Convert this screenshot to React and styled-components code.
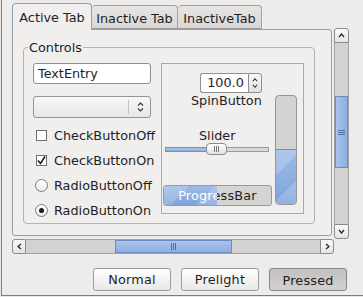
import React from "react";
import styled, { createGlobalStyle } from "styled-components";

const GlobalStyle = createGlobalStyle`
  html, body {
    margin: 0;
    padding: 0;
    background: #e9e8e7;
    overflow: hidden;
  }
  body {
    font-family: "DejaVu Sans", "Liberation Sans", sans-serif;
    font-size: 12.8px;
    color: #1e1e1e;
  }
`;

const BLUE = "linear-gradient(180deg, #a9c4ec 0%, #8eafe2 100%)";
const STRIPES =
  "repeating-linear-gradient(135deg, rgba(255,255,255,0.18) 0 18px, rgba(255,255,255,0) 18px 36px), linear-gradient(180deg, #9dbbe8 0%, #7fa3da 100%)";

const Window = styled.div`
  box-sizing: border-box;
  margin-left: 1px;
  width: 363px;
  height: 296px;
  border-left: 1px solid #7c7c7c;
  border-bottom: 1px solid #7c7c7c;
  background: #edeceb;
  padding: 3px 0 0 10px;
  display: flex;
  flex-direction: column;
`;

const Scrolled = styled.div`
  display: grid;
  grid-template-columns: 322px 15px;
  grid-template-rows: 236px 15px;
`;

const Notebook = styled.div`
  display: flex;
  flex-direction: column;
`;

const TabRow = styled.div`
  display: flex;
  align-items: flex-end;
  height: 26px;
`;

const Tab = styled.div`
  box-sizing: border-box;
  width: ${(p) => p.$w}px;
  height: ${(p) => (p.$active ? 27 : 24)}px;
  margin-bottom: ${(p) => (p.$active ? -1 : 0)}px;
  position: relative;
  z-index: ${(p) => (p.$active ? 2 : 0)};
  border: 1px solid ${(p) => (p.$active ? "#8c9fbd" : "#a2a2a2")};
  border-bottom: ${(p) => (p.$active ? "none" : "1px solid #9c9c9c")};
  border-left: ${(p) => (p.$first || p.$active ? "" : "none")};
  border-radius: 4px 4px 0 0;
  background: ${(p) =>
    p.$active ? "#f0efee" : "linear-gradient(180deg, #e6e5e4 0%, #d8d7d5 100%)"};
  display: flex;
  justify-content: center;
  padding-top: ${(p) => (p.$active ? 6 : 5)}px;
  line-height: 15px;
  white-space: nowrap;
`;

const Panel = styled.div`
  box-sizing: border-box;
  width: 320px;
  height: 207px;
  border: 1px solid #9c9c9c;
  border-radius: 0 3px 3px 3px;
  background: #f0efee;
  padding: 17px 0 0 10px;
`;

const Frame = styled.div`
  box-sizing: border-box;
  position: relative;
  width: 292px;
  height: 177px;
  border: 1px solid #b3b3b3;
  border-radius: 4px;
  padding: 15px 0 0 9px;
  display: flex;
  gap: 10px;
`;

const FrameLabel = styled.span`
  position: absolute;
  top: -8px;
  left: 4px;
  padding: 0 1px;
  line-height: 15px;
  background: #f0efee;
`;

const LeftCol = styled.div`
  width: 118px;
  flex-shrink: 0;
  display: flex;
  flex-direction: column;
`;

const Entry = styled.div`
  box-sizing: border-box;
  height: 21px;
  border: 1px solid #8e8e8e;
  border-radius: 3px;
  background: #ffffff;
  padding-left: 4px;
  line-height: 19px;
`;

const Combo = styled.div`
  box-sizing: border-box;
  margin-top: 12px;
  height: 22px;
  border: 1px solid #959595;
  border-radius: 3px;
  background: linear-gradient(180deg, #f8f8f7 0%, #e7e6e5 100%);
  display: flex;
  justify-content: flex-end;
  align-items: center;
`;

const ComboSep = styled.div`
  width: 1px;
  height: 14px;
  background: #c2c2c2;
  margin-right: 5px;
`;

const ComboArrow = styled.div`
  width: 12px;
  margin-right: 4px;
  display: flex;
  justify-content: center;
`;

const Toggles = styled.div`
  margin-top: 5px;
  display: flex;
  flex-direction: column;
`;

const ToggleRow = styled.div`
  height: 25px;
  display: flex;
  align-items: center;
  line-height: 15px;
  white-space: nowrap;
`;

const Box = styled.div`
  box-sizing: border-box;
  flex-shrink: 0;
  width: 11px;
  height: 11px;
  margin: 0 7px 0 3px;
  border: 1px solid #6e6e6e;
  background: #fff;
  display: flex;
  align-items: center;
  justify-content: center;
`;

const Radio = styled.div`
  box-sizing: border-box;
  flex-shrink: 0;
  width: 13px;
  height: 13px;
  margin: 0 6px 0 2px;
  border: 1px solid #7a7a7a;
  border-radius: 50%;
  background: linear-gradient(180deg, #ffffff 0%, #ecebea 100%);
  display: flex;
  align-items: center;
  justify-content: center;
  &::after {
    content: "";
    display: ${(p) => (p.$on ? "block" : "none")};
    width: 5px;
    height: 5px;
    border-radius: 50%;
    background: #1c1c1c;
  }
`;

const RightFrame = styled.div`
  box-sizing: border-box;
  flex-shrink: 0;
  width: 143px;
  height: 151px;
  border: 1px solid #a9a9a9;
  padding: 9px 1px 0 1px;
  display: flex;
  flex-direction: column;
`;

const Spin = styled.div`
  margin-left: 37px;
  display: flex;
  height: 20px;
`;

const SpinEntry = styled.div`
  box-sizing: border-box;
  width: 48px;
  border: 1px solid #8e8e8e;
  border-right: none;
  border-radius: 3px 0 0 3px;
  background: #fff;
  line-height: 18px;
  text-align: center;
  padding-left: 2px;
`;

const SpinArrows = styled.div`
  box-sizing: border-box;
  width: 14px;
  border: 1px solid #8e8e8e;
  border-radius: 0 3px 3px 0;
  background: linear-gradient(180deg, #f7f7f6 0%, #e3e2e1 100%);
  display: flex;
  flex-direction: column;
  align-items: center;
  justify-content: center;
`;

const Body = styled.div`
  display: flex;
  gap: 3px;
`;

const SubCol = styled.div`
  width: 109px;
  display: flex;
  flex-direction: column;
`;

const Caption = styled.div`
  line-height: 15px;
  margin-top: ${(p) => p.$top || 0}px;
  padding-left: ${(p) => p.$left || 0}px;
  white-space: nowrap;
`;

const Slider = styled.div`
  margin-left: 2px;
  width: 104px;
  height: 12px;
  display: flex;
  align-items: center;
`;

const SliderFill = styled.div`
  box-sizing: border-box;
  width: 41px;
  height: 5px;
  border: 1px solid #6f90c6;
  border-right: none;
  background: ${BLUE};
`;

const SliderKnob = styled.div`
  box-sizing: border-box;
  width: 21px;
  height: 12px;
  border: 1px solid #8a8a8a;
  border-radius: 4px;
  background: linear-gradient(180deg, #ffffff 0%, #e4e3e2 100%);
  display: flex;
  align-items: center;
  justify-content: center;
`;

const SliderRest = styled.div`
  box-sizing: border-box;
  flex: 1;
  height: 5px;
  border: 1px solid #9a9a9a;
  border-left: none;
  background: #d9d8d7;
`;

const Progress = styled.div`
  box-sizing: border-box;
  position: relative;
  margin-top: 30px;
  width: 109px;
  height: 21px;
  border: 1px solid #9a9a9a;
  border-radius: 3px;
  background: #d5d4d3;
  overflow: hidden;
`;

const ProgressText = styled.div`
  width: 107px;
  line-height: 19px;
  text-align: center;
  letter-spacing: 0.2px;
  white-space: nowrap;
  color: #1e1e1e;
`;

const ProgressFill = styled.div`
  position: absolute;
  top: 0;
  left: 0;
  bottom: 0;
  width: 107px;
  line-height: 19px;
  text-align: center;
  letter-spacing: 0.2px;
  white-space: nowrap;
  color: #ffffff;
  background: ${STRIPES};
  background-repeat: no-repeat;
`;

const VScale = styled.div`
  box-sizing: border-box;
  margin-top: 2px;
  width: 22px;
  height: 110px;
  border: 1px solid #969696;
  border-radius: 4px;
  background: #d4d3d2;
  overflow: hidden;
  display: flex;
  flex-direction: column;
  justify-content: flex-end;
`;

const VScaleFill = styled.div`
  height: 54px;
  border-top: 1px solid #6f90c6;
  background: ${STRIPES};
`;

const VScroll = styled.div`
  box-sizing: border-box;
  margin-top: 25px;
  display: flex;
  flex-direction: column;
`;

const HScroll = styled.div`
  display: flex;
`;

const ArrowBtn = styled.div`
  box-sizing: border-box;
  width: ${(p) => (p.$h ? 14 : 15)}px;
  height: 15px;
  border: 1px solid #8b8b8b;
  border-radius: ${(p) => p.$r};
  background: linear-gradient(180deg, #fafafa 0%, #e6e5e4 100%);
  display: flex;
  align-items: center;
  justify-content: center;
  flex-shrink: 0;
`;

const Trough = styled.div`
  box-sizing: border-box;
  flex: 1;
  background: #d3d2d1;
  border: 1px solid #a3a3a3;
  ${(p) =>
    p.$h
      ? "border-left: none; border-right: none; padding-left: 89px; display: flex;"
      : "border-top: none; border-bottom: none; padding-top: 53px;"}
`;

const Thumb = styled.div`
  box-sizing: border-box;
  width: ${(p) => (p.$h ? "117px" : "100%")};
  height: ${(p) => (p.$h ? "100%" : "72px")};
  border: 1px solid #6a8cc4;
  background: ${(p) =>
    p.$h ? BLUE : "linear-gradient(90deg, #a9c4ec 0%, #8eafe2 100%)"};
  display: flex;
  align-items: center;
  justify-content: center;
`;

const ButtonRow = styled.div`
  margin-top: 14px;
  padding-right: 17px;
  display: flex;
  justify-content: flex-end;
  gap: 10px;
`;

const Button = styled.div`
  box-sizing: border-box;
  width: 78px;
  height: 23px;
  border: 1px solid ${(p) => (p.$pressed ? "#8a8887" : "#9a9a9a")};
  border-radius: 3px;
  background: ${(p) =>
    p.$pressed
      ? "linear-gradient(180deg, #c3c1bf 0%, #d3d1cf 100%)"
      : "linear-gradient(180deg, #ffffff 0%, #e9e8e7 100%)"};
  text-align: center;
  line-height: 21px;
  padding-top: ${(p) => (p.$pressed ? 1 : 0)}px;
  letter-spacing: 0.2px;
`;

const Chevron = ({ dir, size = 7 }) => {
  const paths = {
    up: "M1 5 L3.5 2 L6 5",
    down: "M1 2 L3.5 5 L6 2",
    left: "M5 1 L2 3.5 L5 6",
    right: "M2 1 L5 3.5 L2 6",
  };
  return (
    <svg width={size} height={size} viewBox="0 0 7 7">
      <path d={paths[dir]} fill="none" stroke="#222" strokeWidth="1.2" />
    </svg>
  );
};

const Grip = ({ vertical }) =>
  vertical ? (
    <svg width="7" height="7" viewBox="0 0 7 7">
      <path d="M0 1.5H7M0 3.5H7M0 5.5H7" stroke="#4d6fa8" strokeWidth="1" />
    </svg>
  ) : (
    <svg width="7" height="7" viewBox="0 0 7 7">
      <path d="M1.5 0V7M3.5 0V7M5.5 0V7" stroke="#4d6fa8" strokeWidth="1" />
    </svg>
  );

const KnobGrip = () => (
  <svg width="7" height="6" viewBox="0 0 7 6">
    <path d="M1.5 0V6M3.5 0V6M5.5 0V6" stroke="#7a7a7a" strokeWidth="1" />
  </svg>
);

const Check = () => (
  <svg width="9" height="9" viewBox="0 0 9 9">
    <path d="M1 4.5 L3.5 7.5 L8 0.5" fill="none" stroke="#1c1c1c" strokeWidth="1.6" />
  </svg>
);

const UpDown = () => (
  <svg width="7" height="12" viewBox="0 0 7 12">
    <path d="M1 4.5 L3.5 2 L6 4.5 M1 7.5 L3.5 10 L6 7.5" fill="none" stroke="#333" strokeWidth="1.1" />
  </svg>
);

const progress = 53;

const App = () => {
  return (
    <>
      <GlobalStyle />
      <Window>
        <Scrolled>
          <Notebook>
            <TabRow>
              <Tab $active $first $w={80}>Active Tab</Tab>
              <Tab $w={86}>Inactive Tab</Tab>
              <Tab $w={84}>InactiveTab</Tab>
            </TabRow>
            <Panel>
              <Frame>
                <FrameLabel>Controls</FrameLabel>
                <LeftCol>
                  <Entry>TextEntry</Entry>
                  <Combo>
                    <ComboSep />
                    <ComboArrow>
                      <UpDown />
                    </ComboArrow>
                  </Combo>
                  <Toggles>
                    <ToggleRow>
                      <Box />
                      CheckButtonOff
                    </ToggleRow>
                    <ToggleRow>
                      <Box>
                        <Check />
                      </Box>
                      CheckButtonOn
                    </ToggleRow>
                    <ToggleRow>
                      <Radio />
                      RadioButtonOff
                    </ToggleRow>
                    <ToggleRow>
                      <Radio $on />
                      RadioButtonOn
                    </ToggleRow>
                  </Toggles>
                </LeftCol>
                <RightFrame>
                  <Spin>
                    <SpinEntry>100.0</SpinEntry>
                    <SpinArrows>
                      <Chevron dir="up" size={6} />
                      <Chevron dir="down" size={6} />
                    </SpinArrows>
                  </Spin>
                  <Body>
                    <SubCol>
                      <Caption $left={28}>SpinButton</Caption>
                      <Caption $top={20} $left={36}>Slider</Caption>
                      <Slider>
                        <SliderFill />
                        <SliderKnob>
                          <KnobGrip />
                        </SliderKnob>
                        <SliderRest />
                      </Slider>
                      <Progress>
                        <ProgressText>ProgressBar</ProgressText>
                        <ProgressFill
                          style={{
                            clipPath: `inset(0 ${107 - progress}px 0 0)`,
                          }}
                        >
                          ProgressBar
                        </ProgressFill>
                      </Progress>
                    </SubCol>
                    <VScale>
                      <VScaleFill />
                    </VScale>
                  </Body>
                </RightFrame>
              </Frame>
            </Panel>
          </Notebook>
          <VScroll>
            <ArrowBtn $r="3px 3px 0 0">
              <Chevron dir="up" />
            </ArrowBtn>
            <Trough>
              <Thumb>
                <Grip vertical />
              </Thumb>
            </Trough>
            <ArrowBtn $r="0 0 3px 3px">
              <Chevron dir="down" />
            </ArrowBtn>
          </VScroll>
          <HScroll>
            <ArrowBtn $h $r="3px 0 0 3px">
              <Chevron dir="left" />
            </ArrowBtn>
            <Trough $h>
              <Thumb $h>
                <Grip />
              </Thumb>
            </Trough>
            <ArrowBtn $h $r="0 3px 3px 0">
              <Chevron dir="right" />
            </ArrowBtn>
          </HScroll>
        </Scrolled>
        <ButtonRow>
          <Button>Normal</Button>
          <Button>Prelight</Button>
          <Button $pressed>Pressed</Button>
        </ButtonRow>
      </Window>
    </>
  );
};

export default App;
